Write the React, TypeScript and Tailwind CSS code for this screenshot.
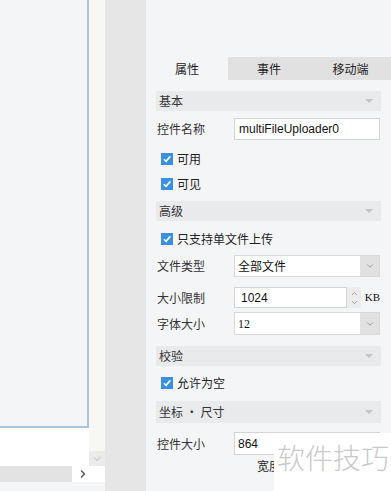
import { ChevronDown, ChevronRight, ChevronUp } from 'lucide-react';

const cjk = { fontFamily: '"Noto Sans CJK SC", "Liberation Sans", sans-serif' };

function SectionHeader({ title, className }: { title: string; className: string }) {
  return (
    <div className={`mx-[10px] flex items-center justify-between bg-[#e9eaec] pl-[3px] pr-[8px] ${className}`}>
      <span className="text-[12px] text-[#333]">{title}</span>
      <span className="h-0 w-0 border-x-[4px] border-t-[4px] border-x-transparent border-t-[#c4c4c4]" />
    </div>
  );
}

function CheckRow({ label, className }: { label: string; className: string }) {
  return (
    <div className={`ml-[15px] flex h-[20px] items-center gap-[4px] ${className}`}>
      <span className="flex h-[12px] w-[12px] items-center justify-center bg-[#3b8fe3]">
        <svg width="10" height="10" viewBox="0 0 10 10">
          <path d="M1.8 5.2 L4 7.4 L8.4 2.4" fill="none" stroke="white" strokeWidth="1.6" />
        </svg>
      </span>
      <span className="text-[12px] text-[#222]">{label}</span>
    </div>
  );
}

function FieldRow({ label, className, children }: { label: string; className: string; children: React.ReactNode }) {
  return (
    <div className={`ml-[11px] flex items-center ${className}`}>
      <span className="w-[77px] text-[12px] text-[#333]">{label}</span>
      <div className="flex h-full flex-1 items-stretch pr-[11px]">{children}</div>
    </div>
  );
}

function SelectBox({ value, serif }: { value: string; serif?: boolean }) {
  return (
    <div className="flex flex-1 items-stretch border border-[#d9d9d9] bg-white">
      <span
        className="flex flex-1 items-center pl-[3px] text-[12px] text-[#111]"
        style={serif ? { fontFamily: '"Liberation Serif", serif' } : undefined}
      >
        {value}
      </span>
      <span className="flex w-[19px] items-center justify-center bg-[#e1e1e1]">
        <ChevronDown size={10} strokeWidth={1.5} color="#777" />
      </span>
    </div>
  );
}

export default function App() {
  return (
    <div className="relative flex h-[491px] w-[391px] overflow-hidden bg-white" style={cjk}>
      {/* editor canvas + scrollbars */}
      <div className="flex w-[105px] flex-col">
        <div className="flex h-[466px]">
          <div className="flex w-[89px] flex-col bg-white">
            <div className="h-[428px] border-b-2 border-r-2 border-[#a9c6de] bg-[#f4f5f7]" />
          </div>
          <div className="flex w-[16px] flex-col bg-[#f8f7f4]">
            <div className="flex-1" />
            <div className="flex h-[15px] items-center justify-center bg-[#ebebe9]">
              <ChevronDown size={12} strokeWidth={2} color="#b5b5b5" />
            </div>
          </div>
        </div>
        <div className="flex h-[16px]">
          <div className="w-[72px] bg-[#e3e3e3]" />
          <div className="flex flex-1 items-center bg-white pl-[5px]">
            <ChevronRight size={12} strokeWidth={3} color="#555" />
          </div>
        </div>
        <div className="flex-1 bg-[#f4f5f7]" />
      </div>

      <div className="w-[41px] bg-[#e6e6e6]" />

      {/* property panel */}
      <div className="flex flex-1 flex-col bg-[#f4f5f7] pt-[57px]">
        <div className="flex h-[23px] text-[12px] text-[#222]">
          <div className="flex w-[82px] items-center justify-center">属性</div>
          <div className="flex w-[82px] items-center justify-center bg-[#e1e1e1]">事件</div>
          <div className="flex flex-1 items-center justify-center bg-[#e1e1e1]">移动端</div>
        </div>

        <SectionHeader title="基本" className="mt-[11px] h-[20px]" />
        <FieldRow label="控件名称" className="mt-[7px] h-[22px]">
          <div
            className="flex flex-1 items-center border border-[#d4d4d4] bg-white pl-[4px] text-[12px] text-[#111]"
            style={{ fontFamily: '"Liberation Sans", sans-serif' }}
          >
            multiFileUploader0
          </div>
        </FieldRow>
        <CheckRow label="可用" className="mt-[9px]" />
        <CheckRow label="可见" className="mt-[5px]" />

        <SectionHeader title="高级" className="mt-[7px] h-[20px]" />
        <CheckRow label="只支持单文件上传" className="mt-[8px]" />
        <FieldRow label="文件类型" className="mt-[6px] h-[22px]">
          <SelectBox value="全部文件" />
        </FieldRow>
        <FieldRow label="大小限制" className="mt-[10px] h-[21px]">
          <div
            className="flex flex-1 items-center border border-[#d4d4d4] bg-white pl-[6px] text-[12px] text-[#111]"
            style={{ fontFamily: '"Liberation Sans", sans-serif' }}
          >
            1024
          </div>
          <div className="flex w-[14px] flex-col items-center justify-center bg-[#ececec]">
            <ChevronUp size={9} strokeWidth={1.5} color="#666" />
            <ChevronDown size={9} strokeWidth={1.5} color="#666" />
          </div>
          <span
            className="flex w-[19px] items-center justify-end text-[11px] text-[#111]"
            style={{ fontFamily: '"Liberation Serif", serif' }}
          >
            KB
          </span>
        </FieldRow>
        <FieldRow label="字体大小" className="mt-[4px] h-[23px]">
          <SelectBox value="12" serif />
        </FieldRow>

        <SectionHeader title="校验" className="mt-[11px] h-[20px]" />
        <CheckRow label="允许为空" className="mt-[7px]" />

        <SectionHeader title="坐标 · 尺寸" className="mt-[8px] h-[22px]" />
        <FieldRow label="控件大小" className="mt-[9px] h-[23px]">
          <div
            className="flex flex-1 items-center border border-[#d4d4d4] bg-white pl-[3px] text-[12px] text-[#111]"
            style={{ fontFamily: '"Liberation Sans", sans-serif' }}
          >
            864
          </div>
        </FieldRow>
        <div className="mt-[3px] flex h-[16px] items-center pl-[111px] text-[12px] text-[#222]">宽度</div>
      </div>

      {/* watermark */}
      <div className="absolute left-[274px] top-[433px] flex h-[58px] w-[117px] items-start bg-white pl-[3px] pt-[9px]">
        <span className="text-[28px] font-light leading-[30px] tracking-[0px] text-[#c9c9c9]">软件技巧</span>
      </div>
    </div>
  );
}
